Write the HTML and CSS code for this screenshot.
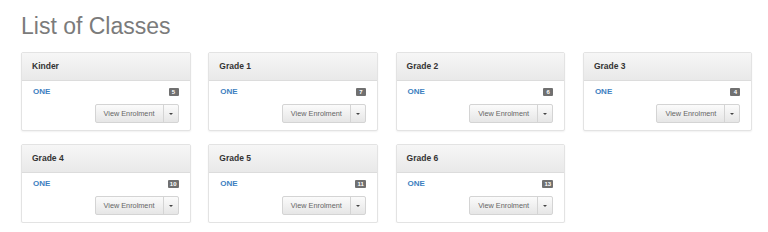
FILE: index.html
```html
<!DOCTYPE html>
<html>
<head>
<meta charset="utf-8">
<link rel="stylesheet" href="styles.css">
</head>
<body>
<div class="page">
  <h1 class="title">List of Classes</h1>
  <div class="grid">
    <div class="panel">
      <div class="panel-head">Kinder</div>
      <div class="panel-body">
        <div class="row"><span class="link">ONE</span><span class="badge">5</span></div>
        <div class="actions"><div class="btn-group"><span class="btn">View Enrolment</span><span class="btn caret-btn"><span class="caret"></span></span></div></div>
      </div>
    </div>
    <div class="panel">
      <div class="panel-head">Grade 1</div>
      <div class="panel-body">
        <div class="row"><span class="link">ONE</span><span class="badge">7</span></div>
        <div class="actions"><div class="btn-group"><span class="btn">View Enrolment</span><span class="btn caret-btn"><span class="caret"></span></span></div></div>
      </div>
    </div>
    <div class="panel">
      <div class="panel-head">Grade 2</div>
      <div class="panel-body">
        <div class="row"><span class="link">ONE</span><span class="badge">6</span></div>
        <div class="actions"><div class="btn-group"><span class="btn">View Enrolment</span><span class="btn caret-btn"><span class="caret"></span></span></div></div>
      </div>
    </div>
    <div class="panel">
      <div class="panel-head">Grade 3</div>
      <div class="panel-body">
        <div class="row"><span class="link">ONE</span><span class="badge">4</span></div>
        <div class="actions"><div class="btn-group"><span class="btn">View Enrolment</span><span class="btn caret-btn"><span class="caret"></span></span></div></div>
      </div>
    </div>
    <div class="panel">
      <div class="panel-head">Grade 4</div>
      <div class="panel-body">
        <div class="row"><span class="link">ONE</span><span class="badge">10</span></div>
        <div class="actions"><div class="btn-group"><span class="btn">View Enrolment</span><span class="btn caret-btn"><span class="caret"></span></span></div></div>
      </div>
    </div>
    <div class="panel">
      <div class="panel-head">Grade 5</div>
      <div class="panel-body">
        <div class="row"><span class="link">ONE</span><span class="badge">11</span></div>
        <div class="actions"><div class="btn-group"><span class="btn">View Enrolment</span><span class="btn caret-btn"><span class="caret"></span></span></div></div>
      </div>
    </div>
    <div class="panel">
      <div class="panel-head">Grade 6</div>
      <div class="panel-body">
        <div class="row"><span class="link">ONE</span><span class="badge">13</span></div>
        <div class="actions"><div class="btn-group"><span class="btn">View Enrolment</span><span class="btn caret-btn"><span class="caret"></span></span></div></div>
      </div>
    </div>
  </div>
</div>
</body>
</html>
```

FILE: styles.css
```css
html, body {
  margin: 0;
  padding: 0;
  background: #fff;
  font-family: "Liberation Sans", Arial, sans-serif;
}
.page {
  padding: 12px 14px 0 21px;
}
.title {
  margin: 0 0 12px 0;
  font-size: 23px;
  font-weight: normal;
  color: #7b7b7b;
  line-height: 28px;
}
.grid {
  display: grid;
  grid-template-columns: repeat(4, 169.5px);
  column-gap: 17.8px;
  row-gap: 13px;
}
.panel {
  border: 1px solid #e3e3e3;
  border-radius: 2px;
  box-shadow: 0 1px 2px rgba(0,0,0,0.06);
  background: #fff;
}
.panel-head {
  height: 27px;
  line-height: 27px;
  padding-left: 10px;
  font-size: 8.5px;
  font-weight: bold;
  color: #333;
  background: linear-gradient(#f6f6f6, #e9e9e9);
  border-bottom: 1px solid #dcdcdc;
}
.panel-body {
  padding: 7px 11px 7px 11px;
}
.row {
  display: flex;
  justify-content: space-between;
  align-items: center;
  height: 8px;
}
.link {
  font-size: 8px;
  font-weight: bold;
  color: #3d7fbf;
  line-height: 8px;
}
.badge {
  background: #707070;
  color: #fff;
  font-size: 6px;
  font-weight: bold;
  line-height: 8px;
  height: 8px;
  min-width: 6px;
  padding: 0 2px;
  text-align: center;
  border-radius: 1px;
}
.actions {
  display: flex;
  justify-content: flex-end;
  margin-top: 8px;
}
.btn-group {
  display: flex;
  height: 19px;
  border: 1px solid #d4d4d4;
  border-radius: 2px;
  box-sizing: border-box;
  background: linear-gradient(#fbfbfb, #e6e6e6);
}
.btn {
  display: flex;
  align-items: center;
  font-size: 7.3px;
  color: #666;
  padding: 0 8px;
}
.caret-btn {
  border-left: 1px solid #d4d4d4;
  padding: 0 5px;
  width: 4px;
  justify-content: center;
}
.caret {
  width: 0;
  height: 0;
  border-left: 2px solid transparent;
  border-right: 2px solid transparent;
  border-top: 2px solid #444;
}
```
